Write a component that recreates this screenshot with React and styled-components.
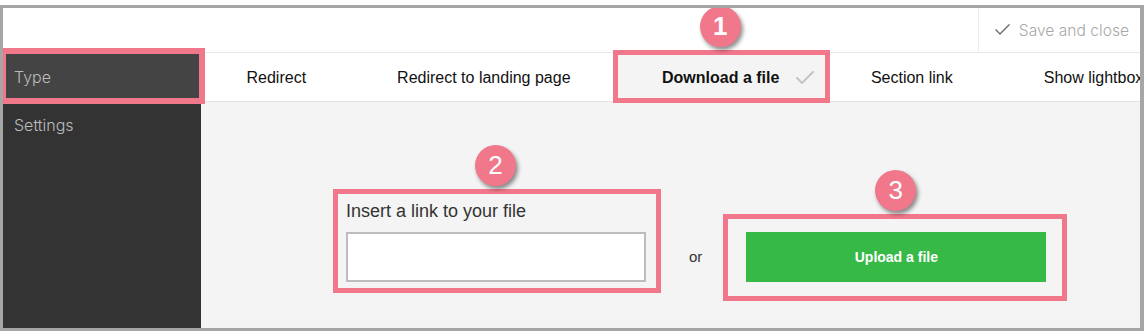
import styled, { createGlobalStyle } from "styled-components";

const pink = "#f0788a";

const GlobalStyle = createGlobalStyle`
  html, body {
    margin: 0;
    padding: 0;
    background: #fff;
  }
  * {
    box-sizing: border-box;
  }
`;

function Check({ size = 18, color = "#c4c4c4", width = 2 }) {
  return (
    <svg width={size} height={size * 0.75} viewBox="0 0 18 13.5" fill="none">
      <path
        d="M1 7 L6 12 L17 1"
        stroke={color}
        strokeWidth={width}
        strokeLinecap="round"
        strokeLinejoin="round"
      />
    </svg>
  );
}

function App() {
  return (
    <>
      <GlobalStyle />
      <Frame>
        <TopBar>
          <SaveButton>
            <Check size={15} color="#6a6a6a" width={1.6} />
            Save and close
          </SaveButton>
        </TopBar>
        <Body>
          <Sidebar>
            <SideItem $active>
              Type
              <Marker $t={-5} $l={-3} $r={-4} $b={-3} $w={6} />
            </SideItem>
            <SideItem>Settings</SideItem>
          </Sidebar>
          <Main>
            <Tabs>
              <Tab>Redirect</Tab>
              <Tab>Redirect to landing page</Tab>
              <Tab $active>
                Download a file
                <Check />
                <Marker $t={-3} $l={-3} $r={-5} $b={-2} $w={5} />
                <Badge $top={-47}>1</Badge>
              </Tab>
              <Tab>Section link</Tab>
              <Tab>Show lightbox</Tab>
            </Tabs>
            <Content>
              <Form>
                <Field>
                  <Label>Insert a link to your file</Label>
                  <Input type="text" />
                  <Marker $t={-12} $l={-13} $r={-15} $b={-11} $w={5} />
                  <Badge $top={-56}>2</Badge>
                </Field>
                <Or>or</Or>
                <UploadWrap>
                  <UploadButton>Upload a file</UploadButton>
                  <Marker $t={-18} $l={-23} $r={-21} $b={-19} $w={5} />
                  <Badge $top={-62}>3</Badge>
                </UploadWrap>
              </Form>
            </Content>
          </Main>
        </Body>
      </Frame>
    </>
  );
}

export default App;

const Frame = styled.div`
  margin-top: 5px;
  width: 1144px;
  height: 326px;
  border: 3px solid #a6a6a6;
  border-right-width: 4px;
  display: flex;
  flex-direction: column;
  overflow: hidden;
  background: #fff;
`;

const TopBar = styled.div`
  height: 45px;
  flex: none;
  display: flex;
  justify-content: flex-end;
  border-bottom: 1px solid #e9e9e9;
  background: #fff;
`;

const SaveButton = styled.div`
  display: flex;
  align-items: center;
  gap: 9px;
  padding: 0 11px 0 16px;
  border-left: 1px solid #ececec;
  font-family: Inter, "Noto Sans", sans-serif;
  font-weight: 300;
  font-size: 15.6px;
  color: #a8a8a8;
  white-space: nowrap;
`;

const Body = styled.div`
  flex: 1;
  display: flex;
  min-height: 0;
`;

const Sidebar = styled.div`
  width: 198px;
  flex: none;
  background: #333333;
`;

const SideItem = styled.div`
  position: relative;
  height: 48px;
  display: flex;
  align-items: center;
  padding-left: 11px;
  background: ${(p) => (p.$active ? "#444444" : "transparent")};
  font-family: Inter, "Noto Sans", sans-serif;
  font-weight: 300;
  font-size: 16px;
  color: #bcbcbc;
`;

const Main = styled.div`
  flex: 1;
  display: flex;
  flex-direction: column;
  min-width: 0;
`;

const Tabs = styled.div`
  height: 49px;
  flex: none;
  display: flex;
  background: #fff;
  border-bottom: 1px solid #e3e3e3;
  white-space: nowrap;
`;

const Tab = styled.div`
  position: relative;
  display: flex;
  align-items: center;
  gap: 17px;
  padding: ${(p) => (p.$active ? "1px 11px 0 46px" : "1px 45.5px 0")};
  background: ${(p) => (p.$active ? "#f4f4f4" : "#fff")};
  font-family: "Liberation Sans", Arial, sans-serif;
  font-size: 16px;
  font-weight: ${(p) => (p.$active ? 700 : 400)};
  color: #111;
  flex: none;
`;

const Marker = styled.div`
  position: absolute;
  top: ${(p) => p.$t}px;
  left: ${(p) => p.$l}px;
  right: ${(p) => p.$r}px;
  bottom: ${(p) => p.$b}px;
  border: ${(p) => p.$w}px solid ${pink};
  pointer-events: none;
  z-index: 2;
`;

const Badge = styled.div`
  position: absolute;
  top: ${(p) => p.$top}px;
  left: 50%;
  margin-left: -21px;
  width: 41px;
  height: 41px;
  border-radius: 50%;
  background: ${pink};
  box-shadow: 2px 3px 4px rgba(0, 0, 0, 0.45);
  display: flex;
  align-items: center;
  justify-content: center;
  font-family: "Liberation Sans", Arial, sans-serif;
  font-size: 26px;
  color: #fff;
  z-index: 3;
`;

const Content = styled.div`
  flex: 1;
  background: #f4f4f4;
  padding: 99px 0 0 145px;
`;

const Form = styled.div`
  display: flex;
  align-items: flex-end;
`;

const Field = styled.div`
  position: relative;
  display: flex;
  flex-direction: column;
  width: 300px;
`;

const Label = styled.label`
  font-family: "Liberation Sans", Arial, sans-serif;
  font-size: 18px;
  line-height: 21px;
  color: #333;
  margin-bottom: 10px;
`;

const Input = styled.input`
  width: 300px;
  height: 50px;
  border: 2px solid #bdbdbd;
  background: #fff;
  outline: none;
`;

const Or = styled.div`
  height: 50px;
  line-height: 50px;
  margin: 0 44px 0 43px;
  font-family: "Liberation Sans", Arial, sans-serif;
  font-size: 15px;
  color: #333;
`;

const UploadWrap = styled.div`
  position: relative;
  width: 300px;
  height: 50px;
`;

const UploadButton = styled.button`
  width: 100%;
  height: 100%;
  border: none;
  background: #37b947;
  color: #fff;
  font-family: "Liberation Sans", Arial, sans-serif;
  font-size: 14px;
  font-weight: 700;
  cursor: pointer;
`;
